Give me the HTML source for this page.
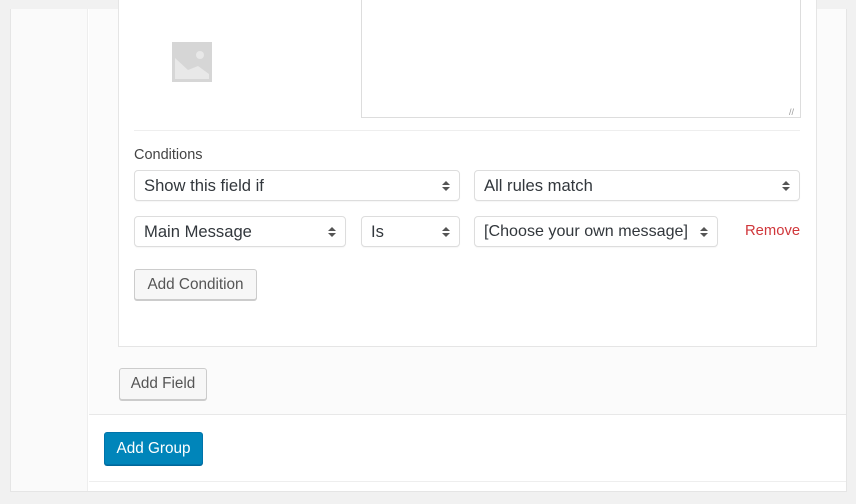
<!DOCTYPE html>
<html><head><style>
*{box-sizing:border-box;margin:0;padding:0}
body{width:856px;height:504px;background:#f1f1f1;font-family:"Liberation Sans",sans-serif;position:relative;overflow:hidden;color:#32373c}
.abs{position:absolute}
.card{left:10px;top:9px;width:837px;height:483px;background:#fff;border:1px solid #e5e5e5;border-top:none}
.sel{position:absolute;height:31px;border:1px solid #ddd;border-radius:4px;background:#fff;font-size:16.6px;line-height:29px;padding-left:9px;color:#32373c;box-shadow:0 1px 1px rgba(0,0,0,.04)}
.sel:after{content:"";position:absolute;right:9px;top:10px;width:0;height:0;border-left:4px solid transparent;border-right:4px solid transparent;border-bottom:4px solid #555}
.sel:before{content:"";position:absolute;right:9px;top:16px;width:0;height:0;border-left:4px solid transparent;border-right:4px solid transparent;border-top:4px solid #555}
.btn{position:absolute;border:1px solid #ccc;border-radius:3px;background:#f7f7f7;font-size:15.3px;color:#555;text-align:center;box-shadow:0 1px 0 #ccc}
</style></head><body>
<div class="abs card"></div>
<div class="abs" style="left:11px;top:9px;width:77px;height:482px;background:#fafafa;border-right:1px solid #eee"></div>
<div class="abs" style="left:89px;top:9px;width:757px;height:406px;background:#fbfbfb;border-bottom:1px solid #e8e8e8"></div>
<div class="abs" style="left:118px;top:0;width:699px;height:347px;background:#fff;border:1px solid #e5e5e5;border-top:none"></div>
<svg class="abs" style="left:172px;top:42px" width="40" height="40" viewBox="0 0 40 40"><rect width="40" height="40" fill="#d6d6d6"/><path d="M3 16 L16 28 L26 24 L37 32 L37 37 L3 37Z" fill="#e8e8e8"/><circle cx="28" cy="13" r="4" fill="#e8e8e8"/></svg>
<div class="abs" style="left:361px;top:0;width:440px;height:118px;border:1px solid #ddd;border-top:none;background:#fff"></div>
<div class="abs" style="left:789px;top:107px;font-size:9px;color:#999">//</div>
<div class="abs" style="left:134px;top:130px;width:666px;height:1px;background:#eee"></div>
<div class="abs" style="left:134px;top:147px;font-size:14.5px;color:#444">Conditions</div>
<div class="sel" style="left:134px;top:170px;width:326px">Show this field if</div>
<div class="sel" style="left:474px;top:170px;width:326px">All rules match</div>
<div class="sel" style="left:134px;top:216px;width:212px">Main Message</div>
<div class="sel" style="left:361px;top:216px;width:99px">Is</div>
<div class="sel" style="left:474px;top:216px;width:244px;font-size:16.1px">[Choose your own message]</div>
<div class="abs" style="left:745px;top:223px;font-size:14.8px;color:#d0373b">Remove</div>
<div class="btn" style="left:134px;top:269px;width:123px;height:31px;line-height:29px">Add Condition</div>
<div class="btn" style="left:119px;top:368px;width:88px;height:32px;line-height:30px">Add Field</div>
<div class="abs" style="left:89px;top:481px;width:757px;height:1px;background:#eee"></div>
<div class="abs" style="left:104px;top:432px;width:99px;height:33px;background:#0085ba;border:1px solid #0073aa;border-radius:3px;color:#fff;font-size:15.3px;line-height:31px;text-align:center;box-shadow:0 1px 0 #006799">Add Group</div>
</body></html>
